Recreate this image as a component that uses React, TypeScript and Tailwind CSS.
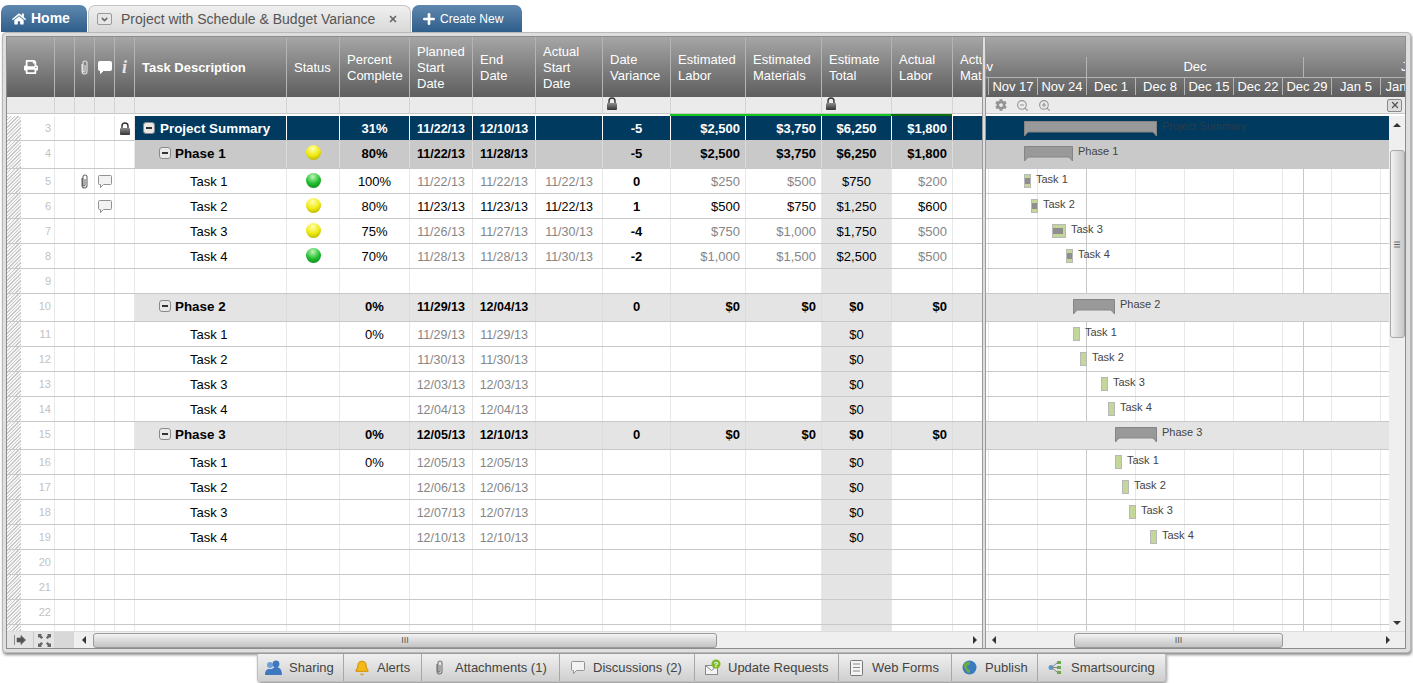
import React from 'react';
import { Plus, X, ZoomIn, ZoomOut, Bell, ChevronDown } from 'lucide-react';
import { FaCog, FaHome, FaPrint } from 'react-icons/fa';

const colWidths = [48, 20, 20, 20, 20, 152, 53, 70, 63, 63, 67, 68, 75, 76, 70, 61, 40];

const cellBase = 'shrink-0 h-full overflow-hidden flex items-center border-r';

type RowKind = 'summary' | 'phase1' | 'phase' | 'task' | 'blank';

interface RowData {
  n: number;
  kind: RowKind;
  name?: string;
  status?: 'yellow' | 'green';
  pct?: string;
  planned?: string;
  end?: string;
  actual?: string;
  variance?: string;
  labor?: string;
  materials?: string;
  total?: string;
  actualLabor?: string;
  muted?: boolean;
  clip?: boolean;
  comment?: boolean;
  bar?: number;
  barWidth?: number;
  inner?: number;
}

const rows: RowData[] = [
  { n: 3, kind: 'summary', name: 'Project Summary', pct: '31%', planned: '11/22/13', end: '12/10/13', variance: '-5', labor: '$2,500', materials: '$3,750', total: '$6,250', actualLabor: '$1,800', bar: 38, barWidth: 133 },
  { n: 4, kind: 'phase1', name: 'Phase 1', status: 'yellow', pct: '80%', planned: '11/22/13', end: '11/28/13', variance: '-5', labor: '$2,500', materials: '$3,750', total: '$6,250', actualLabor: '$1,800', bar: 38, barWidth: 49 },
  { n: 5, kind: 'task', name: 'Task 1', status: 'green', pct: '100%', planned: '11/22/13', end: '11/22/13', actual: '11/22/13', variance: '0', labor: '$250', materials: '$500', total: '$750', actualLabor: '$200', muted: true, clip: true, comment: true, bar: 38, barWidth: 7, inner: 7 },
  { n: 6, kind: 'task', name: 'Task 2', status: 'yellow', pct: '80%', planned: '11/23/13', end: '11/23/13', actual: '11/22/13', variance: '1', labor: '$500', materials: '$750', total: '$1,250', actualLabor: '$600', comment: true, bar: 45, barWidth: 7, inner: 7 },
  { n: 7, kind: 'task', name: 'Task 3', status: 'yellow', pct: '75%', planned: '11/26/13', end: '11/27/13', actual: '11/30/13', variance: '-4', labor: '$750', materials: '$1,000', total: '$1,750', actualLabor: '$500', muted: true, bar: 66, barWidth: 14, inner: 10 },
  { n: 8, kind: 'task', name: 'Task 4', status: 'green', pct: '70%', planned: '11/28/13', end: '11/28/13', actual: '11/30/13', variance: '-2', labor: '$1,000', materials: '$1,500', total: '$2,500', actualLabor: '$500', muted: true, bar: 80, barWidth: 7, inner: 5 },
  { n: 9, kind: 'blank' },
  { n: 10, kind: 'phase', name: 'Phase 2', pct: '0%', planned: '11/29/13', end: '12/04/13', variance: '0', labor: '$0', materials: '$0', total: '$0', actualLabor: '$0', bar: 87, barWidth: 42 },
  { n: 11, kind: 'task', name: 'Task 1', pct: '0%', planned: '11/29/13', end: '11/29/13', total: '$0', muted: true, bar: 87, barWidth: 7 },
  { n: 12, kind: 'task', name: 'Task 2', planned: '11/30/13', end: '11/30/13', total: '$0', muted: true, bar: 94, barWidth: 7 },
  { n: 13, kind: 'task', name: 'Task 3', planned: '12/03/13', end: '12/03/13', total: '$0', muted: true, bar: 115, barWidth: 7 },
  { n: 14, kind: 'task', name: 'Task 4', planned: '12/04/13', end: '12/04/13', total: '$0', muted: true, bar: 122, barWidth: 7 },
  { n: 15, kind: 'phase', name: 'Phase 3', pct: '0%', planned: '12/05/13', end: '12/10/13', variance: '0', labor: '$0', materials: '$0', total: '$0', actualLabor: '$0', bar: 129, barWidth: 42 },
  { n: 16, kind: 'task', name: 'Task 1', pct: '0%', planned: '12/05/13', end: '12/05/13', total: '$0', muted: true, bar: 129, barWidth: 7 },
  { n: 17, kind: 'task', name: 'Task 2', planned: '12/06/13', end: '12/06/13', total: '$0', muted: true, bar: 136, barWidth: 7 },
  { n: 18, kind: 'task', name: 'Task 3', planned: '12/07/13', end: '12/07/13', total: '$0', muted: true, bar: 143, barWidth: 7 },
  { n: 19, kind: 'task', name: 'Task 4', planned: '12/10/13', end: '12/10/13', total: '$0', muted: true, bar: 164, barWidth: 7 },
  { n: 20, kind: 'blank' },
  { n: 21, kind: 'blank' },
  { n: 22, kind: 'blank' },
  { n: 23, kind: 'blank' },
];

const rowHeight = (k: RowKind) => (k === 'phase1' || k === 'phase' ? 'h-[28px]' : 'h-[25px]');

function Ball({ color }: { color: 'yellow' | 'green' }) {
  return (
    <span
      className={
        color === 'yellow'
          ? 'block -mt-[4px] w-[15px] h-[15px] rounded-full bg-[radial-gradient(circle_at_45%_25%,#ffffb0,#f0ea10_50%,#a8a200_95%)]'
          : 'block -mt-[4px] w-[15px] h-[15px] rounded-full bg-[radial-gradient(circle_at_45%_25%,#c0f5b8,#22c030_50%,#0a7a16_95%)]'
      }
    />
  );
}

function MinusBox() {
  return (
    <span className="w-[12px] h-[12px] -mt-[2px] shrink-0 rounded-[3px] border border-[#8a8a8a] bg-[#e8e8e8] flex items-center justify-center">
      <span className="block w-[6px] h-[2px] bg-[#333]" />
    </span>
  );
}

function CommentIcon({ filled }: { filled?: boolean }) {
  return (
    <svg width="14" height="13" viewBox="0 0 14 13">
      <path
        d="M1.500 .5h11a1 1 0 011 1v7a1 1 0 01-1 1h-7l-3 3v-3h-1a1 1 0 01-1-1v-7a1 1 0 011-1z"
        fill={filled ? '#fff' : '#f2f2f2'}
        stroke={filled ? '#fff' : '#929292'}
      />
    </svg>
  );
}

function ClipIcon({ color }: { color: string }) {
  return (
    <svg width="9" height="15" viewBox="0 0 9 15">
      <path
        d="M2 4v7.500a2.500 2.500 0 005 0V3a2 2 0 00-4 0v8a1 1 0 002 0V5"
        fill="none"
        stroke={color}
        strokeWidth="1.100"
      />
    </svg>
  );
}

function LockIcon() {
  return (
    <svg width="12" height="13" viewBox="0 0 12 13">
      <defs>
        <linearGradient id="lockBody" x1="0" y1="0" x2="0" y2="1">
          <stop offset="0" stopColor="#8c8c8c" />
          <stop offset="1" stopColor="#333" />
        </linearGradient>
      </defs>
      <path d="M3 6V4a3 3 0 016 0v2" fill="none" stroke="#333" strokeWidth="1.400" />
      <rect x="1" y="6" width="10" height="7" rx="1" fill="url(#lockBody)" />
    </svg>
  );
}

function HeaderCell({ w, children, bold }: { w: number; children?: React.ReactNode; bold?: boolean }) {
  return (
    <div
      className={`shrink-0 h-full flex items-center border-r border-[#b4b4b4] pl-[7px] pt-[2px] text-[13px] leading-[16px] text-white whitespace-nowrap ${bold ? 'font-bold' : ''}`}
      style={{ width: w }}
    >
      <span>{children}</span>
    </div>
  );
}

function TableHeader() {
  return (
    <div className="flex h-[60px] bg-gradient-to-b from-[#a6a6a6] to-[#5e5e5e]">
      <div className="shrink-0 h-full flex items-center justify-center border-r border-[#b4b4b4]" style={{ width: 48 }}>
        <FaPrint size={14} className="text-white" />
      </div>
      <div className="shrink-0 h-full border-r border-[#b4b4b4]" style={{ width: 20 }} />
      <div className="shrink-0 h-full flex items-center justify-center border-r border-[#b4b4b4]" style={{ width: 20 }}>
        <ClipIcon color="#e4e4e4" />
      </div>
      <div className="shrink-0 h-full flex items-center justify-center border-r border-[#b4b4b4]" style={{ width: 20 }}>
        <CommentIcon filled />
      </div>
      <div className="shrink-0 h-full flex items-center justify-center border-r border-[#b4b4b4] text-[18px] font-bold italic text-[#e8e8e8] [font-family:'Liberation_Serif',serif]" style={{ width: 20 }}>
        i
      </div>
      <HeaderCell w={152} bold>Task Description</HeaderCell>
      <HeaderCell w={53}>Status</HeaderCell>
      <HeaderCell w={70}>Percent<br />Complete</HeaderCell>
      <HeaderCell w={63}>Planned<br />Start<br />Date</HeaderCell>
      <HeaderCell w={63}>End<br />Date</HeaderCell>
      <HeaderCell w={67}>Actual<br />Start<br />Date</HeaderCell>
      <HeaderCell w={68}>Date<br />Variance</HeaderCell>
      <HeaderCell w={75}>Estimated<br />Labor</HeaderCell>
      <HeaderCell w={76}>Estimated<br />Materials</HeaderCell>
      <HeaderCell w={70}>Estimate<br />Total</HeaderCell>
      <HeaderCell w={61}>Actual<br />Labor</HeaderCell>
      <HeaderCell w={40}>Actual<br />Materials</HeaderCell>
    </div>
  );
}

function FilterRow() {
  return (
    <>
      <div className="flex h-[16px] bg-[#ebebeb] border-b border-[#c8c8c8] box-content">
        {colWidths.map((w, i) => (
          <div key={i} className="shrink-0 h-full border-r border-[#d4d4d4] pl-[3px]" style={{ width: w }}>
            {(i === 11 || i === 14) && <LockIcon />}
          </div>
        ))}
      </div>
      <div className="flex h-[2px]">
        <div className="shrink-0" style={{ width: 663 }} />
        <div className="shrink-0 bg-[#14c81e]" style={{ width: 221 }} />
        <div className="shrink-0 bg-[#0c700c]" style={{ width: 61 }} />
      </div>
    </>
  );
}

function TableRow({ r }: { r: RowData }) {
  const navy = r.kind === 'summary';
  const isHead = navy || r.kind === 'phase1' || r.kind === 'phase';
  const lift = r.kind === 'phase1' || r.kind === 'phase' ? 'pb-[1px]' : 'pt-[2px]';
  const bg = navy ? 'bg-[#003a5f]' : r.kind === 'phase1' ? 'bg-[#c9c9c9]' : r.kind === 'phase' ? 'bg-[#e4e4e4]' : 'bg-white';
  const line = navy ? 'border-white' : isHead ? 'border-[#dcdcdc]' : 'border-[#e8e8e8]';
  const text = navy ? 'text-white font-bold' : isHead ? 'text-black font-bold' : 'text-black';
  const dates = isHead ? text : r.muted ? 'text-[#868686]' : 'text-black';
  const money = isHead ? text : r.muted ? 'text-[#868686]' : 'text-black';
  const dataCell = `${cellBase} ${line} ${bg} ${lift}`;

  return (
    <div className={`flex ${rowHeight(r.kind)} border-b border-[#c8c8c8] text-[13px]`}>
      <div className="shrink-0 h-full flex border-r border-[#e8e8e8] bg-white" style={{ width: 48 }}>
        <div className="w-[14px] h-full bg-[repeating-linear-gradient(135deg,#c8c8c8_0_1px,#f6f6f6_1px_2.500px)]" />
        <div className="flex-1 text-right pr-[3px] pt-[6px] text-[11px] leading-[13px] text-[#c2c2c2]">{r.n}</div>
      </div>
      <div className="shrink-0 h-full border-r border-[#e8e8e8]" style={{ width: 20 }} />
      <div className={`${cellBase} border-[#e8e8e8] justify-center`} style={{ width: 20 }}>
        {r.clip && <ClipIcon color="#666" />}
      </div>
      <div className={`${cellBase} border-[#e8e8e8] justify-center`} style={{ width: 20 }}>
        {r.comment && <CommentIcon />}
      </div>
      <div className={`${cellBase} border-[#e8e8e8] justify-center`} style={{ width: 20 }}>
        {navy && <LockIcon />}
      </div>
      <div className={`${dataCell} ${text} ${isHead ? 'text-[13.400px]' : ''} ${navy ? 'pl-[8px] gap-[5px]' : isHead ? 'pl-[24px] gap-[4px]' : 'pl-[55px]'}`} style={{ width: 152 }}>
        {isHead && <MinusBox />}
        {r.name}
      </div>
      <div className={`${dataCell} justify-center`} style={{ width: 53 }}>
        {r.status && <Ball color={r.status} />}
      </div>
      <div className={`${dataCell} justify-center ${text}`} style={{ width: 70 }}>{r.pct}</div>
      <div className={`${dataCell} justify-center text-[12.500px] ${dates}`} style={{ width: 63 }}>{r.planned}</div>
      <div className={`${dataCell} justify-center text-[12.500px] ${dates}`} style={{ width: 63 }}>{r.end}</div>
      <div className={`${dataCell} justify-center text-[12.500px] ${dates}`} style={{ width: 67 }}>{r.actual}</div>
      <div className={`${dataCell} justify-center font-bold ${navy ? 'text-white' : 'text-black'}`} style={{ width: 68 }}>{r.variance}</div>
      <div className={`${dataCell} justify-end pr-[5px] ${money}`} style={{ width: 75 }}>{r.labor}</div>
      <div className={`${dataCell} justify-end pr-[5px] ${money}`} style={{ width: 76 }}>{r.materials}</div>
      <div className={`${cellBase} ${line} ${lift} ${navy ? 'bg-[#003a5f]' : r.kind === 'phase1' ? 'bg-[#c9c9c9]' : 'bg-[#e4e4e4]'} justify-center ${navy ? 'text-white' : 'text-black'} ${isHead ? 'font-bold' : ''}`} style={{ width: 70 }}>{r.total}</div>
      <div className={`${dataCell} justify-end pr-[5px] ${money}`} style={{ width: 61 }}>{r.actualLabor}</div>
      <div className={dataCell} style={{ width: 40 }} />
    </div>
  );
}

// week columns of the gantt body: width + whether the line is a month line
const ganttCols = [
  { w: 3, dark: false },
  { w: 49, dark: false },
  { w: 49, dark: true },
  { w: 49, dark: false },
  { w: 49, dark: false },
  { w: 49, dark: false },
  { w: 49, dark: false },
  { w: 21, dark: true },
  { w: 28, dark: false },
  { w: 49, dark: false },
];

function SummaryBar({ w }: { w: number }) {
  return (
    <svg width={w} height={16} viewBox={`0 0 ${w} 16`} className="shrink-0 mt-[5px]">
      <path d={`M0.500 0.500H${w - 0.5}V15L${w - 4} 11H4L0.500 15Z`} fill="#999" stroke="#858585" />
    </svg>
  );
}

function GanttRow({ r }: { r: RowData }) {
  const navy = r.kind === 'summary';
  const isHead = navy || r.kind === 'phase1' || r.kind === 'phase';
  const bg = navy ? 'bg-[#003a5f]' : r.kind === 'phase1' ? 'bg-[#c9c9c9]' : r.kind === 'phase' ? 'bg-[#e4e4e4]' : 'bg-white';
  const done = r.inner ?? 0;

  return (
    <div className={`relative flex ${rowHeight(r.kind)} border-b border-[#c8c8c8] ${bg}`}>
      {!isHead && ganttCols.map((c, i) => (
        <div key={i} className={`shrink-0 h-full border-r ${c.dark ? 'border-[#c8c8c8]' : 'border-[#e8e8e8]'}`} style={{ width: c.w }} />
      ))}
      {r.bar !== undefined && (
        <div className="absolute top-0 left-0 h-full flex items-start" style={{ marginLeft: r.bar }}>
          {isHead ? (
            <SummaryBar w={r.barWidth!} />
          ) : (
            <span className="shrink-0 h-[14px] mt-[5px] border border-[#b8b8b8] bg-[#c4d79b] flex items-center" style={{ width: r.barWidth }}>
              {done > 0 && <span className="block h-[6px] bg-[#8e8e8e]" style={{ width: Math.min(done, r.barWidth! - 2) }} />}
            </span>
          )}
          <span className={`ml-[5px] mt-[4px] text-[11px] leading-[13px] whitespace-nowrap ${navy ? 'text-[#2a3d4c]' : 'text-[#444]'}`}>{r.name}</span>
        </div>
      )}
    </div>
  );
}

function GanttHeader() {
  const weeks = ['Nov 17', 'Nov 24', 'Dec 1', 'Dec 8', 'Dec 15', 'Dec 22', 'Dec 29', 'Jan 5', 'Jan 12'];
  return (
    <div className="h-[60px] overflow-hidden bg-gradient-to-b from-[#a6a6a6] to-[#5e5e5e] text-white text-[13px] leading-[16px]">
      <div className="h-[20px]" />
      <div className="flex h-[20px] items-center">
        <div className="shrink-0 w-[101px] h-full border-r border-[#b4b4b4] overflow-hidden flex items-center">
          <span className="-ml-[16px]">Nov</span>
        </div>
        <div className="shrink-0 w-[217px] h-full border-r border-[#b4b4b4] flex items-center justify-center">Dec</div>
        <div className="flex-1 h-full overflow-hidden flex items-center pl-[97px]">Jan</div>
      </div>
      <div className="flex h-[20px] border-t border-[#b4b4b4] pb-[2px]">
        <div className="shrink-0 w-[3px] border-r border-[#b4b4b4]" />
        {weeks.map(w => (
          <div key={w} className="shrink-0 w-[49px] border-r border-[#b4b4b4] flex items-center justify-center whitespace-nowrap overflow-hidden">
            {w}
          </div>
        ))}
      </div>
    </div>
  );
}

function ScrollArrow({ dir }: { dir: 'left' | 'right' | 'up' | 'down' }) {
  const d = dir === 'left' ? 'M6 0v8L2 4z' : dir === 'right' ? 'M2 0v8l4-4z' : dir === 'up' ? 'M0 6h8L4 2z' : 'M0 2h8L4 6z';
  return (
    <svg width="8" height="8" viewBox="0 0 8 8" className="shrink-0">
      <path d={d} fill="#333" />
    </svg>
  );
}

function HThumb({ w }: { w: number }) {
  return (
    <div
      className="shrink-0 h-[15px] rounded-[3px] border border-[#9a9a9a] bg-gradient-to-b from-[#f2f2f2] to-[#c4c4c4] flex items-center justify-center text-[9px] leading-[9px] text-[#555]"
      style={{ width: w }}
    >
      III
    </div>
  );
}

function BottomTab({ icon, label, w, last, first }: { icon: React.ReactNode; label: string; w: number; last?: boolean; first?: boolean }) {
  return (
    <div
      className={`shrink-0 h-full flex items-center gap-[7px] ${first ? 'pl-[7px]' : 'pl-[9px]'} ${last ? '' : 'border-r border-[#a8a8a8]'}`}
      style={{ width: w }}
    >
      <span className="w-[17px] h-[17px] flex items-center justify-center shrink-0">{icon}</span>
      <span className="text-[13px] text-[#444] whitespace-nowrap">{label}</span>
    </div>
  );
}

export default function App() {
  return (
    <div className="w-[1413px] h-[683px] overflow-hidden bg-white [font-family:'Liberation_Sans',Arial,sans-serif]">
      {/* Tabs */}
      <div className="flex h-[32px] items-end pl-[1px] gap-[1px]">
        <div className="w-[86px] h-[27px] rounded-t-[7px] bg-gradient-to-b from-[#5f88ae] to-[#2f5e8b] flex items-center gap-[5px] pl-[11px] text-white font-bold text-[14px]">
          <FaHome size={14} /> Home
        </div>
        <div className="w-[323px] h-[27px] rounded-t-[7px] border border-b-0 border-[#c4c4c4] bg-gradient-to-b from-[#f0f0f0] to-[#d8d8d8] flex items-center pl-[8px] text-[14px] text-[#555]">
          <span className="w-[15px] h-[12px] rounded-[2px] border border-[#9a9a9a] bg-[#e6e6e6] flex items-center justify-center">
            <ChevronDown size={9} strokeWidth={4} className="text-[#666]" />
          </span>
          <span className="ml-[9px] flex-1 whitespace-nowrap">Project with Schedule &amp; Budget Variance</span>
          <X size={10} strokeWidth={4} className="text-[#666] mr-[12px]" />
        </div>
        <div className="w-[110px] h-[27px] rounded-t-[7px] bg-gradient-to-b from-[#5f88ae] to-[#2f5e8b] flex items-center gap-[3px] pl-[9px] text-white text-[12px]">
          <Plus size={16} strokeWidth={4} /> Create New
        </div>
      </div>

      {/* Sheet panel */}
      <div className="ml-[2px] w-[1409px] h-[621px] rounded-[4px] border border-[#b8b8b8] bg-[#dedede] pt-[3px] pl-[3px] pr-[4px] pb-[4px] shadow-[1px_2px_3px_rgba(0,0,0,0.45)]">
        <div className="flex h-[613px] border border-[#8c8c8c] bg-white overflow-hidden">
          {/* Grid */}
          <div className="w-[975px] shrink-0 flex flex-col overflow-hidden">
            <div className="flex-1 overflow-hidden w-[1000px]">
              <TableHeader />
              <FilterRow />
              {rows.map(r => <TableRow key={r.n} r={r} />)}
            </div>
            <div className="flex h-[17px] shrink-0 items-center bg-[#efefef] border-t border-[#dcdcdc]">
              <div className="w-[27px] h-full flex items-center justify-center border-r border-[#c8c8c8] bg-[#e4e4e4]">
                <svg width="12" height="10" viewBox="0 0 12 10"><path d="M0.500 0v10M3 3h4V0.500L11.500 5 7 9.500V7H3z" fill="#555" stroke="#555" strokeWidth="0.600" /></svg>
              </div>
              <div className="w-[20px] h-full flex items-center justify-center bg-[#e4e4e4]">
                <svg width="13" height="13" viewBox="0 0 13 13" fill="#666"><path d="M0 0h4L3 1 5 3.500 3.500 5 1 3 0 4zM13 0v4l-1-1-2.500 2L8 3.500 10 1 9 0zM0 13V9l1 1 2.500-2L5 9.500 3 12l1 1zM13 13H9l1-1-2-2.500L9.500 8 12 10l1-1z" /></svg>
              </div>
              <div className="w-[20px] h-full bg-[#d8d8d8]" />
              <div className="w-[19px] h-full flex items-center justify-center"><ScrollArrow dir="left" /></div>
              <HThumb w={624} />
              <div className="flex-1" />
              <div className="w-[15px] h-full flex items-center justify-center"><ScrollArrow dir="right" /></div>
            </div>
          </div>

          {/* Splitter */}
          <div className="w-[4px] shrink-0 border-x border-[#9a9a9a] bg-[#dedede]" />

          {/* Gantt */}
          <div className="flex-1 flex flex-col overflow-hidden">
            <GanttHeader />
            <div className="flex h-[16px] bg-[#ebebeb] border-b border-[#c8c8c8] box-content items-center pl-[9px] gap-[9px] text-[#949494]">
              <FaCog size={12} />
              <ZoomOut size={13} />
              <ZoomIn size={13} />
              <div className="flex-1" />
              <div className="w-[15px] h-[13px] mr-[3px] rounded-[2px] border border-[#8a8a8a] bg-[#dcdcdc] flex items-center justify-center">
                <X size={10} strokeWidth={3} className="text-[#555]" />
              </div>
            </div>
            <div className="h-[2px] shrink-0" />
            <div className="flex-1 flex overflow-hidden">
              <div className="w-[403px] shrink-0 overflow-hidden">
                {rows.map(r => <GanttRow key={r.n} r={r} />)}
              </div>
              <div className="flex-1 flex flex-col items-center bg-[#efefef]">
                <div className="h-[17px] flex items-center"><ScrollArrow dir="up" /></div>
                <div className="mt-[17px] w-[15px] h-[188px] shrink-0 rounded-[3px] border border-[#a8a8a8] bg-gradient-to-r from-[#f2f2f2] to-[#c8c8c8] flex items-center justify-center text-[#555] text-[9px] leading-[3px]">
                  <span className="rotate-90">III</span>
                </div>
                <div className="flex-1" />
                <div className="h-[17px] flex items-center"><ScrollArrow dir="down" /></div>
              </div>
            </div>
            <div className="flex h-[17px] shrink-0 items-center bg-[#efefef] border-t border-[#dcdcdc]">
              <div className="w-[15px] h-full flex items-center justify-center"><ScrollArrow dir="left" /></div>
              <div className="w-[73px] shrink-0" />
              <HThumb w={209} />
              <div className="w-[97px] shrink-0" />
              <div className="w-[15px] h-full flex items-center justify-center"><ScrollArrow dir="right" /></div>
            </div>
          </div>
        </div>
      </div>

      {/* Bottom toolbar */}
      <div className="ml-[257px] mt-[1px] w-[909px] h-[28px] flex rounded-b-[4px] border border-t-0 border-[#c0c0c0] bg-gradient-to-b from-[#f0f0f0] to-[#cfcfcf] shadow-[1px_2px_3px_rgba(0,0,0,0.4)]">
        <BottomTab first w={86} label="Sharing" icon={
          <svg width="17" height="16" viewBox="0 0 17 16"><circle cx="5" cy="5" r="3" fill="#6f9fd8" /><circle cx="11" cy="4" r="3.400" fill="#3f78c0" /><path d="M0 15c0-5 2-6 5-6s4 1 4 6zM6 15c0-6 2-8 5-8s6 2 6 8z" fill="#3f78c0" /></svg>
        } />
        <BottomTab w={78} label="Alerts" icon={<Bell size={16} fill="#f2bb1a" className="text-[#d89a10]" />} />
        <BottomTab w={138} label="Attachments (1)" icon={<ClipIcon color="#777" />} />
        <BottomTab w={135} label="Discussions (2)" icon={<CommentIcon />} />
        <BottomTab w={144} label="Update Requests" icon={
          <svg width="17" height="17" viewBox="0 0 17 17">
            <rect x="1.500" y="6.500" width="12" height="9" fill="#f4f4f4" stroke="#8a8a8a" />
            <path d="M1.500 6.500l6 5 6-5" fill="none" stroke="#8a8a8a" />
            <circle cx="12" cy="5" r="4.500" fill="#7ab82a" />
            <text x="12" y="8" textAnchor="middle" fontSize="8" fontWeight="700" fill="#fff">?</text>
          </svg>
        } />
        <BottomTab w={113} label="Web Forms" icon={
          <svg width="13" height="16" viewBox="0 0 13 16"><rect x="0.500" y="0.500" width="12" height="15" rx="1" fill="#f4f4f4" stroke="#777" /><path d="M3 4h7M3 7.500h7M3 11h7" stroke="#888" /></svg>
        } />
        <BottomTab w={86} label="Publish" icon={
          <svg width="15" height="15" viewBox="0 0 15 15"><circle cx="7.500" cy="7.500" r="7" fill="#3a7cc0" /><path d="M4 2c3-1 5 0 4 2s-3 1-3 3 3 2 3 4-2 3-3 1-2-3-3-5 0-4 2-5z" fill="#6aa84a" /></svg>
        } />
        <BottomTab w={129} last label="Smartsourcing" icon={
          <svg width="15" height="13" viewBox="0 0 15 13"><circle cx="3" cy="6.500" r="2.500" fill="#5a9ad0" /><rect x="9" y="0" width="4" height="3" fill="#6aa84a" /><rect x="9" y="5" width="4" height="3" fill="#6aa84a" /><rect x="9" y="10" width="4" height="3" fill="#6aa84a" /><path d="M4 6l5-4M4 6.500h5M4 7l5 4" stroke="#888" /></svg>
        } />
      </div>
    </div>
  );
}
